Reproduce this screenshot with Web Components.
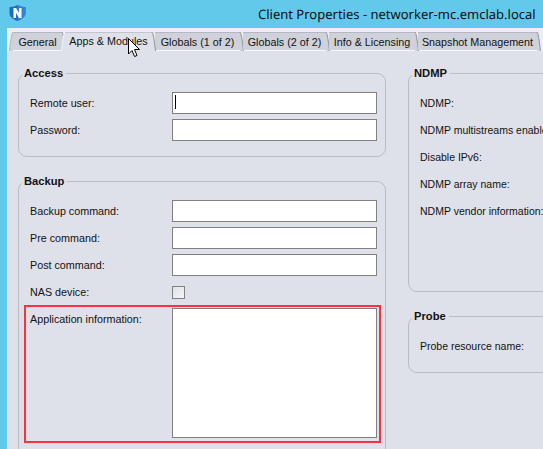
<!DOCTYPE html>
<html><head><meta charset="utf-8">
<style>
html,body{margin:0;padding:0;width:543px;height:449px;overflow:hidden;background:#62c9ea}
</style></head><body>
<app-window>
  <title-bar slot="title">Client Properties - networker-mc.emclab.local</title-bar>
  <tab-strip slot="tabs">
    <tab-item first style="width:49px">General</tab-item>
    <tab-item selected style="width:87px">Apps &amp; Modules</tab-item>
    <tab-item style="width:85px">Globals (1 of 2)</tab-item>
    <tab-item style="width:83px">Globals (2 of 2)</tab-item>
    <tab-item style="width:86px">Info &amp; Licensing</tab-item>
    <tab-item style="width:119px">Snapshot Management</tab-item>
  </tab-strip>
  <div slot="left" style="--label-size:10.75px">
    <group-box title="Access" style="height:84px">
      <field-row label="Remote user:"><text-input caret></text-input></field-row>
      <field-row label="Password:"><text-input></text-input></field-row>
    </group-box>
    <group-box title="Backup" style="margin-top:24px;height:300px">
      <field-row label="Backup command:"><text-input></text-input></field-row>
      <field-row label="Pre command:"><text-input></text-input></field-row>
      <field-row label="Post command:"><text-input></text-input></field-row>
      <field-row label="NAS device:"><check-box></check-box></field-row>
      <outlined-row label="Application information:"></outlined-row>
    </group-box>
  </div>
  <div slot="right" style="--label-size:10.5px">
    <group-box title="NDMP" style="height:219px">
      <field-row label="NDMP:"></field-row>
      <field-row label="NDMP multistreams enabled:"></field-row>
      <field-row label="Disable IPv6:"></field-row>
      <field-row label="NDMP array name:"></field-row>
      <field-row label="NDMP vendor information:"></field-row>
    </group-box>
    <group-box title="Probe" style="margin-top:24px;height:57px">
      <field-row label="Probe resource name:"></field-row>
    </group-box>
  </div>
  <mouse-cursor slot="cursor"></mouse-cursor>
</app-window>
<script>
function def(name, css, html){
  customElements.define(name, class extends HTMLElement{
    connectedCallback(){
      if(this.shadowRoot) return;
      const r=this.attachShadow({mode:'open'});
      r.innerHTML='<style>'+css+'</style>'+(typeof html==='function'?html(this):html);
    }
  });
}
const UI='"Liberation Sans",Arial,sans-serif';
def('app-window',`
:host{display:block;position:relative;width:543px;height:449px;overflow:hidden;background:#62c9ea;font:10.6px ${UI};color:#111}
.client{margin-left:7px;background:#dfe1ea;height:421px;overflow:hidden}
.body{display:grid;grid-template-columns:368px 240px;column-gap:22px;padding:22px 0 0 11px}
`,`<slot name="title"></slot><div class="client"><slot name="tabs"></slot><div class="body"><div><slot name="left"></slot></div><div><slot name="right"></slot></div></div></div><slot name="cursor"></slot>`);
def('title-bar',`
:host{display:flex;align-items:center;height:28px;box-sizing:border-box;padding-left:9px;background:#62c9ea;font:13px "Noto Sans","Open Sans",sans-serif;text-rendering:geometricPrecision;color:#111}
svg{flex:none;width:17px;height:16px;margin-right:232px;margin-top:-2px}
span{white-space:nowrap;margin-top:-1px}
`,`<svg viewBox="0 0 17 16"><path d="M0.500 2 Q4.500 2.500 8.500 0 Q12.500 2.500 16.500 2 V8 C16.500 12 12.500 14.500 8.500 16 C4.500 14.500 .5 12 .5 8Z" fill="#1c6cc2"/><path d="M8.500 0 Q12.500 2.500 16.500 2 V8 C16.500 12 12.500 14.500 8.500 16Z" fill="#2b86d8"/><path d="M4.500 3h2.600l2.900 5V3h2.500v10h-2.500L7 8v5H4.500z" fill="#fff"/></svg><span><slot></slot></span>`);
def('tab-strip',`
:host{display:flex;gap:3px;height:23px;box-sizing:border-box;padding:4px 0 0 6px;background:#eceef2;border-bottom:1px solid #f7f8fb;white-space:nowrap}
`,`<slot></slot>`);
def('tab-item',`
:host{display:block;flex:none;position:relative;height:18px;background:#cfd2da;box-sizing:border-box;text-align:center;font:10.75px/19px ${UI};color:#111;border-top:1px solid #b5b8c0}
:host([selected]){background:#dfe1ea;height:19px;line-height:16px;z-index:1;border-top-color:#c2c5cc}
svg{position:absolute;top:-1px;width:4px;height:19px;overflow:visible}
.r{right:-4px}
.l{left:-4px}
`,el=>{
  const sel=el.hasAttribute('selected'), first=el.hasAttribute('first');
  const c=sel?'#dfe1ea':'#cfd2da';
  const right=`<svg class="r" viewBox="0 0 4 19" preserveAspectRatio="none"><path d="M0 0Q1.500 1 3.500 19H0z" fill="${c}"/><path d="M0 0Q1.500 1 3.500 19" fill="none" stroke="#8f939b"/></svg>`;
  const left=(sel||first)?`<svg class="l" viewBox="0 0 4 19" preserveAspectRatio="none"><path d="M4 0Q2.500 1 .5 19H4z" fill="${c}"/><path d="M4 0Q2.500 1 .5 19" fill="none" stroke="${sel?'#f4f5f8':'#b0b3ba'}"/></svg>`:'';
  return right+left+'<slot></slot>';
});
def('group-box',`
:host{display:block;box-sizing:border-box;position:relative;border:1px solid #bcbcc0;border-radius:9px;padding:18px 5px 0 11px}
b{position:absolute;top:-8px;left:3px;padding:0 3px 0 2px;background:#dfe1ea;font:bold 11.2px/14px ${UI};color:#111}
`,el=>`<b>${el.getAttribute('title')}</b><slot></slot>`);
def('field-row',`
:host{display:grid;grid-template-columns:142px 205px;align-items:center;min-height:22px;margin-bottom:5px;font:var(--label-size,10.6px) ${UI};white-space:nowrap}
`,el=>`<span>${el.getAttribute('label')}</span><slot></slot>`);
def('text-input',`
:host{display:block;height:22px;box-sizing:border-box;background:#fff;border:1px solid #808080;position:relative}
i{position:absolute;left:2px;top:2px;width:1px;height:14px;background:#000}
`,el=>el.hasAttribute('caret')?'<i></i>':'');
def('check-box',`
:host{display:block;width:13px;height:13px;box-sizing:border-box;border:1px solid #808080;background:linear-gradient(135deg,#dfe1ea,#f4f5f8)}
`,'');
def('outlined-row',`
:host{display:grid;grid-template-columns:142px 205px;box-sizing:border-box;width:357px;height:138px;margin:-3px 0 0 -6px;padding:1px 2px 3px 4px;border:2px solid #f8333c;font:var(--label-size,10.6px) ${UI};white-space:nowrap}
span{padding-top:5px}
div{height:130px;box-sizing:border-box;background:#fff;border:1px solid #808080}
`,el=>`<span>${el.getAttribute('label')}</span><div></div>`);
def('mouse-cursor',`
:host{position:absolute;left:128px;top:38px;width:12px;height:20px;z-index:5}
svg{display:block}
`,`<svg width="12" height="20" viewBox="0 0 12 20"><path d="M.5.500V16L4 12.500 6.500 18.500 9 17.500 6.500 11.500H11.500z" fill="#fff" stroke="#000"/></svg>`);
</script>
</body></html>
